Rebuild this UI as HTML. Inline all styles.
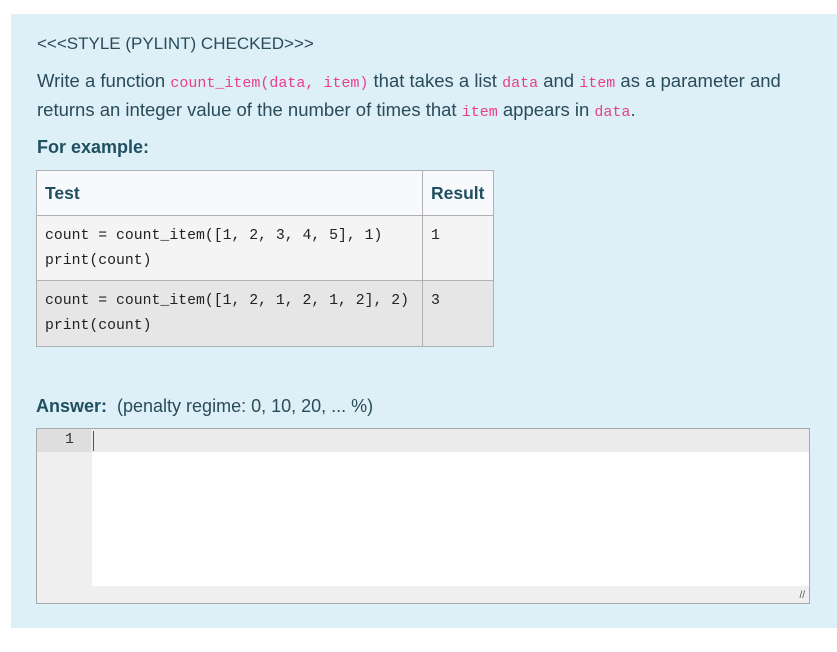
<!DOCTYPE html>
<html><head><style>
body{margin:0;width:837px;height:652px;background:#fff;font-family:"Liberation Sans",sans-serif;position:relative;overflow:hidden}
.panel{position:absolute;left:11px;top:14px;width:826px;height:614px;background:#def0f7}
.t{position:absolute;color:#2a4b5a;white-space:nowrap}
code{font-family:"Liberation Mono",monospace;color:#e83e8c;font-size:15px;line-height:10px}
.b{font-weight:bold;color:#1f4f60}
table{position:absolute;left:36px;top:170px;border-collapse:collapse;table-layout:fixed}
td,th{border:1px solid #b0b0b0;padding:0 8px;text-align:left;vertical-align:top;overflow:visible;white-space:nowrap}
th{height:44px;background:#f8f9fd;font-size:17.5px;color:#1f4f60;vertical-align:middle}
td{font-family:"Liberation Mono",monospace;font-size:14.8px;color:#222;line-height:25px;padding-top:8px;height:57px;box-sizing:border-box}
</style></head><body>
<div class="panel"></div>
<div class="t" style="left:37px;top:34px;font-size:17px">&lt;&lt;&lt;STYLE (PYLINT) CHECKED&gt;&gt;&gt;</div>
<div class="t" style="left:37px;top:66px;font-size:18.5px;line-height:29px">Write a function <code>count_item(data, item)</code> that takes a list <code>data</code> and <code>item</code> as a parameter and<br>returns an integer value of the number of times that <code>item</code> appears in <code>data</code>.</div>
<div class="t b" style="left:37px;top:137px;font-size:18px">For example:</div>
<table>
<colgroup><col style="width:386px"><col style="width:71px"></colgroup>
<tr><th>Test</th><th style="padding-right:0">Result</th></tr>
<tr style="background:#f4f4f4"><td style="height:65px">count = count_item([1, 2, 3, 4, 5], 1)<br>print(count)</td><td>1</td></tr>
<tr style="background:#e6e6e6"><td style="height:66px">count = count_item([1, 2, 1, 2, 1, 2], 2)<br>print(count)</td><td>3</td></tr>
</table>
<div class="t" style="left:36px;top:396px;font-size:18px"><span class="b">Answer:</span>&nbsp; (penalty regime: 0, 10, 20, ... %)</div>
<div style="position:absolute;left:36px;top:428px;width:772px;height:174px;border:1px solid #a8a8a8;background:#efefef">
<div style="position:absolute;left:0;top:0;width:772px;height:23px;background:#ebebeb"></div>
<div style="position:absolute;left:0;top:0;width:54px;height:23px;background:#dedede"></div>
<div style="position:absolute;left:55px;top:23px;width:717px;height:134px;background:#fff"></div>
<div style="position:absolute;left:28px;top:2px;font-family:'Liberation Mono',monospace;font-size:15px;color:#333">1</div>
<div style="position:absolute;left:56px;top:2px;width:1px;height:20px;background:#555"></div>
<div style="position:absolute;right:4px;bottom:2px;font-size:10px;color:#555">//</div>
</div>
</body></html>
